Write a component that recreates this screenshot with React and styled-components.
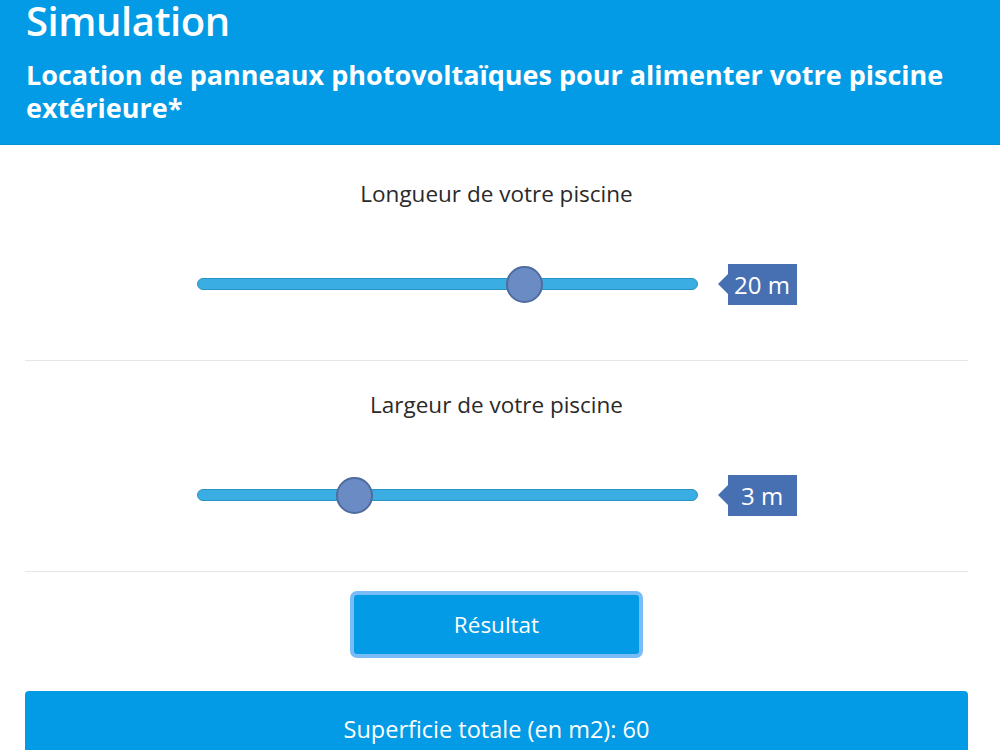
import React, { useState } from 'react'
import styled, { createGlobalStyle } from 'styled-components'

const GlobalStyle = createGlobalStyle`
  body {
    margin: 0;
    font-family: "Open Sans", "Noto Sans", sans-serif;
    color: #212529;
    background: #fff;
  }
`

const BLUE = '#039be5'

const Header = styled.header`
  background: ${BLUE};
  color: #fff;
  padding: 0 26px 20px;
  border-bottom: 1px solid #0390d6;
  margin-bottom: 5px;
`

const Title = styled.h1`
  margin: 0;
  font-size: 40px;
  font-weight: 600;
  line-height: 42px;
  letter-spacing: -0.4px;
`

const Subtitle = styled.h2`
  margin: 16px 0 0;
  font-size: 27px;
  font-weight: 700;
  line-height: 33px;
`

const Main = styled.main`
  padding: 0 32px 0 25px;
`

const Group = styled.section`
  padding: 29px 0 53px;
  border-bottom: 1px solid #e6e6e6;
  text-align: center;
`

const Label = styled.div`
  font-size: 22.5px;
  line-height: 30px;
  color: #2a2a2a;
`

const Row = styled.div`
  margin-top: 52px;
  height: 46px;
  display: flex;
  align-items: center;
  justify-content: center;
`

const Range = styled.input`
  -webkit-appearance: none;
  appearance: none;
  width: 501px;
  height: 38px;
  margin: 0;
  background: transparent;

  &::-webkit-slider-runnable-track {
    height: 12px;
    border-radius: 6px;
    background: #3aade2;
    border: 1px solid #2b93c4;
    box-sizing: border-box;
  }

  &::-webkit-slider-thumb {
    -webkit-appearance: none;
    width: 37px;
    height: 37px;
    margin-top: -13.5px;
    border-radius: 50%;
    background: #6b8bc4;
    border: 2px solid #4f6c9e;
    box-sizing: border-box;
  }

  &:focus {
    outline: none;
  }
`

const Badge = styled.output`
  position: relative;
  margin-left: 30px;
  width: 69px;
  height: 41px;
  display: flex;
  align-items: center;
  justify-content: center;
  background: #4770b3;
  color: #fff;
  font-size: 24px;

  &::before {
    content: '';
    position: absolute;
    left: -10px;
    top: 50%;
    margin-top: -10px;
    border-style: solid;
    border-width: 10px 10px 10px 0;
    border-color: transparent #4770b3 transparent transparent;
  }
`

const Actions = styled.div`
  display: flex;
  justify-content: center;
  padding: 19px 0 33px;
`

const Button = styled.button`
  width: 293px;
  height: 67px;
  border: 4px solid #7abcf7;
  border-radius: 7px;
  background: ${BLUE};
  color: #fff;
  font-family: inherit;
  font-size: 22.5px;
  cursor: pointer;
`

const Result = styled.div`
  background: ${BLUE};
  color: #fff;
  border-radius: 4px;
  padding: 23px 0 40px;
  text-align: center;
  font-size: 23.5px;
  line-height: 30px;
`

const SliderField = ({ label, min, max, value, onChange }) => (
  <Group>
    <Label>{label}</Label>
    <Row>
      <Range
        type="range"
        min={min}
        max={max}
        value={value}
        onChange={e => onChange(Number(e.target.value))}
      />
      <Badge>{value} m</Badge>
    </Row>
  </Group>
)

export default function App() {
  const [longueur, setLongueur] = useState(20)
  const [largeur, setLargeur] = useState(3)
  const [total, setTotal] = useState(60)

  return (
    <>
      <GlobalStyle />
      <Header>
        <Title>Simulation</Title>
        <Subtitle>
          Location de panneaux photovoltaïques pour alimenter votre piscine
          extérieure*
        </Subtitle>
      </Header>
      <Main>
        <SliderField
          label="Longueur de votre piscine"
          min={0}
          max={30}
          value={longueur}
          onChange={setLongueur}
        />
        <SliderField
          label="Largeur de votre piscine"
          min={0}
          max={10}
          value={largeur}
          onChange={setLargeur}
        />
        <Actions>
          <Button onClick={() => setTotal(longueur * largeur)}>Résultat</Button>
        </Actions>
        <Result>Superficie totale (en m2): {total}</Result>
      </Main>
    </>
  )
}
